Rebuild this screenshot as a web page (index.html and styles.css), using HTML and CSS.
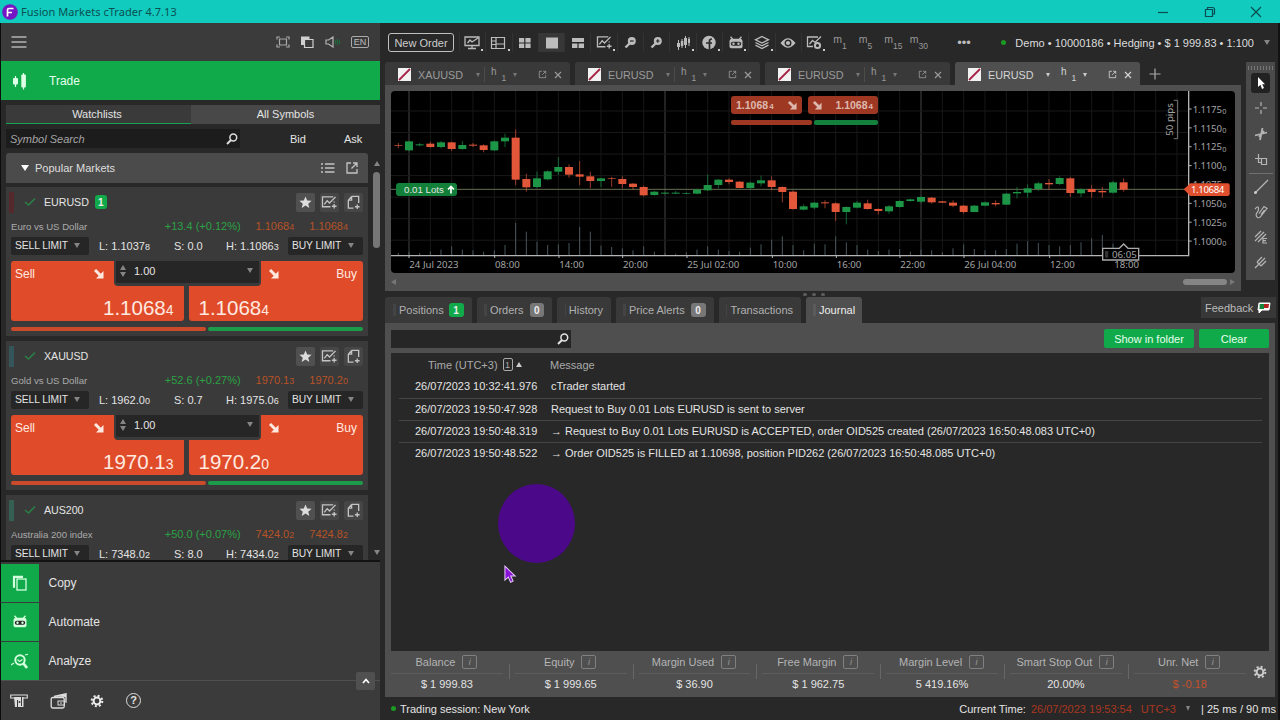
FILE: index.html
```html
<!DOCTYPE html>
<html lang="en">
<head>
    <meta charset="UTF-8">
    <meta name="viewport" content="width=device-width, initial-scale=1.0">
    <title>Fusion Markets cTrader 4.7.13</title>
    <link rel="stylesheet" href="styles.css">
</head>
<body>

<!-- icon set -->
<svg class="defs" width="0" height="0">
    <symbol id="star" viewBox="0 0 16 16"><path d="M8 1.500l1.800 4.400 4.700.3-3.600 3 1.200 4.600L8 11.300l-4.100 2.500 1.200-4.600-3.600-3 4.700-.3z" fill="currentColor"/></symbol>
    <symbol id="chart-add" viewBox="0 0 18 16"><path d="M13 2H1.500v10.500H10M14 7v1M3.500 10l3-4 2.500 2.500 6.500-6.500M14 9.500v5M11.500 12h5" fill="none" stroke="currentColor" stroke-width="1.400"/></symbol>
    <symbol id="doc-add" viewBox="0 0 16 16"><path d="M6 1.500h7.500v7M6 1.500L2.500 5.500v8.500H8M6 1.500v4H2.500M12 10v5M9.500 12.500h5" fill="none" stroke="currentColor" stroke-width="1.400"/></symbol>
    <symbol id="search" viewBox="0 0 12 12"><circle cx="7.300" cy="4.500" r="3.400" fill="none" stroke="currentColor" stroke-width="1.500"/><path d="M5 7L1 11" stroke="currentColor" stroke-width="2"/></symbol>
    <symbol id="arrow" viewBox="0 0 10 10"><path d="M1 1l5 5" stroke="currentColor" stroke-width="3"/><path d="M9.500 2v7.500H2z" fill="currentColor"/></symbol>
    <symbol id="check" viewBox="0 0 12 10"><path d="M1 5l3.500 3L11 1.500" fill="none" stroke="currentColor" stroke-width="1.500"/></symbol>
    <symbol id="popout" viewBox="0 0 14 14"><path d="M6 2H2v10h10V8M8 2h4v4M12 2L6.500 7.500" fill="none" stroke="currentColor" stroke-width="1.300"/></symbol>
    <symbol id="gear" viewBox="0 0 14 14"><circle cx="7" cy="7" r="3.400" fill="none" stroke="currentColor" stroke-width="2"/><circle cx="7" cy="7" r="5.300" fill="none" stroke="currentColor" stroke-width="2" stroke-dasharray="2 2.160"/></symbol>
    <symbol id="robot" viewBox="0 0 16 16"><path d="M2.500 1.800l2.200 2.500M13.500 1.800l-2.200 2.500" stroke="currentColor" stroke-width="1.300"/><path d="M1.500 6.500q0-2.700 2.700-2.700h7.600q2.700 0 2.700 2.700v5q0 1.700-1.700 1.700H3.200q-1.700 0-1.700-1.700z" fill="currentColor"/><rect class="cut" x="2.800" y="6.800" width="10.400" height="4" rx="2"/><circle cx="5.500" cy="8.800" r="1.200" fill="currentColor"/><circle cx="10.500" cy="8.800" r="1.200" fill="currentColor"/></symbol>
    <symbol id="flag" viewBox="0 0 13 13"><path d="M0 0h13v13H0z" fill="#f2f2f2"/><path d="M1 12L12 1" stroke="#a62347" stroke-width="1.800"/></symbol>
</svg>

<header class="titlebar">
    <svg class="logo" width="16" height="16" viewBox="0 0 16 16"><circle cx="8" cy="8" r="7.800" fill="#7416c4"/><path d="M5.500 12.500V6q0-1.500 1.500-1.500h4.500M5.500 8.500H10" fill="none" stroke="#fff" stroke-width="1.700"/></svg>
    <span class="app-name">Fusion Markets cTrader 4.7.13</span>
    <div class="window-buttons">
        <svg width="12" height="12" viewBox="0 0 12 12"><path d="M1 6.500h10"/></svg>
        <svg width="12" height="12" viewBox="0 0 12 12"><path d="M3.500 3V1.500h5q2 0 2 2V8H9M1.500 3.500H8.500v7h-7z"/></svg>
        <svg width="12" height="12" viewBox="0 0 12 12"><path d="M1 1l10 10M11 1L1 11"/></svg>
    </div>
</header>

<div class="app">
    <aside class="sidebar">
        <div class="side-top">
            <svg width="16" height="14" viewBox="0 0 16 14"><path d="M.5 2h15M.5 7h15M.5 12h15" stroke="#b4b4b4" stroke-width="1.600"/></svg>
            <div class="side-tools">
                <svg width="14" height="12" viewBox="0 0 14 12"><path d="M1 3.500V1h3M10 1h3v2.500M13 8.500V11h-3M4 11H1V8.500" fill="none" stroke="#aaa" stroke-width="1.200"/><path d="M3.500 3h7v6h-7z" fill="none" stroke="#aaa" stroke-width="1.200"/></svg>
                <svg width="14" height="12" viewBox="0 0 14 12"><path d="M1 .5h8.500V3H4v6H1z" fill="#d0d0d0"/><path d="M4.500 3.500h8.500v8H4.500z" fill="none" stroke="#d0d0d0" stroke-width="1.200"/></svg>
                <svg width="16" height="12" viewBox="0 0 16 12"><path d="M1 4h2.500L8 1v10L3.500 8H1z" fill="none" stroke="#b4b4b4" stroke-width="1.200"/><path d="M10.500 4v4M12.500 3v6M14.500 4v4" stroke="#1d6a3b" stroke-width="1.200"/></svg>
                <span class="lang">EN</span>
            </div>
        </div>
        <div class="trade-head">
            <svg width="16" height="18" viewBox="0 0 16 18"><path d="M3.500 4v11M11.500 1v16.500" stroke="#dfffe6" stroke-width="1.200"/><rect x="1" y="6" width="5" height="6.500" rx="1" fill="#dfffe6"/><rect x="9.300" y="2.500" width="4.600" height="13" rx="1" fill="#dfffe6"/></svg>
            <span>Trade</span>
        </div>

        <div class="watch">
            <div class="watch-tabs">
                <div class="watch-tab active">Watchlists</div>
                <div class="watch-tab">All Symbols</div>
            </div>
            <div class="search-row">
                <div class="symbol-search"><span>Symbol Search</span><svg width="12" height="12"><use href="#search"/></svg></div>
                <span class="bid">Bid</span>
                <span class="ask">Ask</span>
            </div>
            <div class="scroll-area">
                <div class="list">
                    <div class="group">
                        <i class="tri white"></i><span>Popular Markets</span>
                        <svg class="list-ico" width="14" height="12" viewBox="0 0 14 12"><path d="M0 2h2M4 2h9.500M0 6h2M4 6h9.500M0 10h2M4 10h9.500" stroke="currentColor" stroke-width="1.600"/></svg>
                        <svg width="14" height="14"><use href="#popout"/></svg>
                    </div>

                    <div class="card">
                        <div class="card-head">
                            <i class="mark red"></i><svg class="ok" width="12" height="10"><use href="#check"/></svg>
                            <span class="symbol">EURUSD</span><span class="badge green">1</span>
                            <div class="card-tools">
                                <span class="ico"><svg width="15" height="15"><use href="#star"/></svg></span>
                                <span class="ico"><svg width="17" height="15"><use href="#chart-add"/></svg></span>
                                <span class="ico"><svg width="15" height="15"><use href="#doc-add"/></svg></span>
                            </div>
                        </div>
                        <div class="card-info"><span class="desc">Euro vs US Dollar</span><span class="change">+13.4 (+0.12%)</span><span class="quote">1.1068<small>4</small></span><span class="quote">1.1068<small>4</small></span></div>
                        <div class="card-limits"><span class="limit">SELL LIMIT <i class="tri"></i></span><span class="low">L: 1.1037<small>8</small></span><span class="spread">S: 0.0</span><span class="high">H: 1.1086<small>3</small></span><span class="limit buy">BUY LIMIT <i class="tri"></i></span></div>
                        <div class="deal">
                            <div class="side sell"><div class="side-name"><span>Sell</span><svg width="10" height="10"><use href="#arrow"/></svg></div><div class="price">1.1068<small>4</small></div></div>
                            <div class="side"><div class="side-name"><svg width="10" height="10"><use href="#arrow"/></svg><span>Buy</span></div><div class="price">1.1068<small>4</small></div></div>
                            <div class="volume"><span class="spin"><i class="tri up"></i><i class="tri"></i></span><span>1.00</span><i class="tri end"></i></div>
                        </div>
                        <div class="mood"><i></i><i></i></div>
                    </div>

                    <div class="card">
                        <div class="card-head">
                            <i class="mark teal"></i><svg class="ok" width="12" height="10"><use href="#check"/></svg>
                            <span class="symbol">XAUUSD</span>
                            <div class="card-tools">
                                <span class="ico"><svg width="15" height="15"><use href="#star"/></svg></span>
                                <span class="ico"><svg width="17" height="15"><use href="#chart-add"/></svg></span>
                                <span class="ico"><svg width="15" height="15"><use href="#doc-add"/></svg></span>
                            </div>
                        </div>
                        <div class="card-info"><span class="desc">Gold vs US Dollar</span><span class="change">+52.6 (+0.27%)</span><span class="quote">1970.1<small>3</small></span><span class="quote">1970.2<small>0</small></span></div>
                        <div class="card-limits"><span class="limit">SELL LIMIT <i class="tri"></i></span><span class="low">L: 1962.0<small>0</small></span><span class="spread">S: 0.7</span><span class="high">H: 1975.0<small>6</small></span><span class="limit buy">BUY LIMIT <i class="tri"></i></span></div>
                        <div class="deal">
                            <div class="side sell"><div class="side-name"><span>Sell</span><svg width="10" height="10"><use href="#arrow"/></svg></div><div class="price">1970.1<small>3</small></div></div>
                            <div class="side"><div class="side-name"><svg width="10" height="10"><use href="#arrow"/></svg><span>Buy</span></div><div class="price">1970.2<small>0</small></div></div>
                            <div class="volume"><span class="spin"><i class="tri up"></i><i class="tri"></i></span><span>1.00</span><i class="tri end"></i></div>
                        </div>
                        <div class="mood"><i></i><i></i></div>
                    </div>

                    <div class="card">
                        <div class="card-head">
                            <i class="mark sea"></i><svg class="ok" width="12" height="10"><use href="#check"/></svg>
                            <span class="symbol">AUS200</span>
                            <div class="card-tools">
                                <span class="ico"><svg width="15" height="15"><use href="#star"/></svg></span>
                                <span class="ico"><svg width="17" height="15"><use href="#chart-add"/></svg></span>
                                <span class="ico"><svg width="15" height="15"><use href="#doc-add"/></svg></span>
                            </div>
                        </div>
                        <div class="card-info"><span class="desc">Australia 200 index</span><span class="change">+50.0 (+0.07%)</span><span class="quote">7424.0<small>2</small></span><span class="quote">7424.8<small>2</small></span></div>
                        <div class="card-limits"><span class="limit">SELL LIMIT <i class="tri"></i></span><span class="low">L: 7348.0<small>2</small></span><span class="spread">S: 8.0</span><span class="high">H: 7434.0<small>2</small></span><span class="limit buy">BUY LIMIT <i class="tri"></i></span></div>
                    </div>
                </div>
                <div class="vscroll"><i class="tri up"></i><i class="thumb"></i><i class="tri"></i></div>
            </div>
        </div>

        <nav class="modes">
            <div class="mode"><span class="mode-ico"><svg width="16" height="16" viewBox="0 0 16 16"><path d="M11 1.800H2v11" fill="none" stroke="#d3ffdd" stroke-width="2.200"/><rect x="5" y="4" width="9" height="11" fill="none" stroke="#d3ffdd" stroke-width="1.300"/></svg></span>Copy</div>
            <div class="mode"><span class="mode-ico"><svg width="16" height="16"><use href="#robot"/></svg></span>Automate</div>
            <div class="mode"><span class="mode-ico"><svg width="18" height="16" viewBox="0 0 18 16"><circle cx="9" cy="7" r="4.700" fill="none" stroke="#d3ffdd" stroke-width="2"/><path d="M12.500 10.500L16 15" stroke="#d3ffdd" stroke-width="2.800"/><path d="M6.500 6.500L8.500 8.500l3-2M14 2l3-.8M0 12l3-2" fill="none" stroke="#d3ffdd" stroke-width="1.100"/></svg></span>Analyze</div>
        </nav>
        <div class="side-foot">
            <svg width="18" height="14" viewBox="0 0 18 14"><path d="M.7 1h16.600v3H.7z" fill="none" stroke="#ddd" stroke-width="1.100"/><path d="M4 3h9.500v10H5z" fill="#ddd"/><path d="M7.500 6v7M11.500 3v9" stroke="#3b3b3b"/><circle cx="9.500" cy="8" r="1" fill="#3b3b3b"/></svg>
            <svg width="18" height="16" viewBox="0 0 18 16"><path d="M4 3.500L16 .8v9" fill="none" stroke="#ddd" stroke-width="1.400"/><path d="M5 3.500L16 1v3z" fill="#ddd"/><rect x="1.200" y="4.500" width="13" height="10.500" rx="1.500" fill="none" stroke="#ddd" stroke-width="1.300"/><rect x="8" y="8" width="6.500" height="4" fill="none" stroke="#ddd"/><path d="M10 10h2" stroke="#ddd"/></svg>
            <svg class="w" width="14" height="14"><use href="#gear"/></svg>
            <span class="help">?</span>
            <span class="collapse"><svg width="8" height="6" viewBox="0 0 8 6"><path d="M1 5l3-3.500L7 5" fill="none" stroke="#fff" stroke-width="1.700"/></svg></span>
        </div>
    </aside>

    <main class="main">
        <div class="toolbar">
            <button class="new-order">New Order</button>
            <div class="tools">
                <span class="tool more"><svg width="17" height="15" viewBox="0 0 17 15"><path d="M1 2h14v8.500H1zM8 10.500V13M4 13.500h8M3.500 8l2.500-3 2 2L14 3" fill="none" stroke="currentColor" stroke-width="1.300"/></svg></span>
                <span class="tool more"><svg width="17" height="14" viewBox="0 0 17 14"><path d="M1.500 1.500h13v11h-13zM6 1.500v11M6 8h8.500M1.500 5h4M1.500 8.500h4" fill="none" stroke="currentColor" stroke-width="1.200"/></svg></span>
                <span class="tool"><svg width="14" height="12" viewBox="0 0 14 12"><path d="M1 1h5.200v4.400H1zM7.400 1h5.200v4.400H7.400zM1 6.600h5.200V11H1zM7.400 6.600h5.200V11H7.400z" fill="currentColor"/></svg></span>
                <span class="tool on"><svg width="14" height="12" viewBox="0 0 14 12"><path d="M1 .5h12v11H1z" fill="currentColor"/></svg></span>
                <span class="tool"><svg width="14" height="12" viewBox="0 0 14 12"><path d="M1 1h12v4H1zM1 6.500h5.400V11H1zM7.600 6.500H13V11H7.600z" fill="currentColor"/></svg></span>
                <span class="tool more"><svg width="17" height="15"><use href="#chart-add"/></svg></span>
                <span class="tool"><svg width="13" height="13" viewBox="0 0 13 13"><path d="M5.500 7.500L1.500 11.500" stroke="currentColor" stroke-width="2.400"/><circle cx="7.800" cy="5" r="4" fill="currentColor"/><path d="M6 5h3.600" stroke="#282828" stroke-width="1.200"/></svg></span>
                <span class="tool"><svg width="13" height="13" viewBox="0 0 13 13"><path d="M5.500 7.500L1.500 11.500" stroke="currentColor" stroke-width="2.400"/><circle cx="7.800" cy="5" r="4" fill="currentColor"/><path d="M6 5h3.600M7.800 3.200v3.600" stroke="#282828" stroke-width="1.200"/></svg></span>
                <span class="tool more"><svg width="15" height="16" viewBox="0 0 15 16"><path d="M2.500 5v10M6 4v9M9.500 1v12M13 2v9" stroke="currentColor"/><path d="M1 8h3v4H1zM4.800 6h2.500v5H4.800zM8 3h3v7H8zM12 4h2v4h-2z" fill="currentColor"/></svg></span>
                <span class="tool more"><svg width="15" height="15" viewBox="0 0 15 15"><circle cx="7" cy="7.500" r="6.700" fill="currentColor"/><path d="M7.500 14V6q0-2 2.500-2M4 8h6" fill="none" stroke="#282828" stroke-width="1.700"/></svg></span>
                <span class="tool more"><svg width="16" height="16"><use href="#robot"/></svg></span>
                <span class="tool more"><svg width="16" height="16" viewBox="0 0 16 16"><path d="M8 1.500l6.500 3.300L8 8 1.500 4.800zM1.500 7.500L8 10.800l6.500-3.300M1.500 10.200L8 13.500l6.500-3.300" fill="none" stroke="currentColor" stroke-width="1.300"/></svg></span>
                <span class="tool"><svg width="16" height="12" viewBox="0 0 16 12"><path d="M.5 6Q8-3.500 15.500 6 8 15.500.5 6z" fill="currentColor"/><circle cx="8" cy="6" r="2.800" fill="none" stroke="#282828" stroke-width="1.400"/></svg></span>
                <span class="tool more"><svg width="17" height="15" viewBox="0 0 17 15"><path d="M12 2H1.500v9.500H7M3.500 9l3-3.500L9 7.500l6-6" fill="none" stroke="currentColor" stroke-width="1.300"/><circle cx="11.500" cy="10.500" r="2.600" fill="none" stroke="currentColor" stroke-width="2"/></svg></span>
                <span class="tf">m<sub>1</sub></span>
                <span class="tf">m<sub>5</sub></span>
                <span class="tf">m<sub>15</sub></span>
                <span class="tf">m<sub>30</sub></span>
            </div>
            <span class="dots">•••</span>
            <div class="account"><i class="dot"></i><span>Demo • 10000186 • Hedging • $ 1 999.83 • 1:100</span><i class="tri"></i></div>
        </div>

        <div class="chart-row">
            <section class="chart-col">
                <div class="chart-tabs">
                    <div class="chart-tab"><svg width="13" height="13"><use href="#flag"/></svg><b>XAUUSD</b><i class="tri"></i><span class="period">h<sub>1</sub></span><i class="tri"></i><svg class="pop" width="9" height="9"><use href="#popout"/></svg><svg class="close" width="8" height="8" viewBox="0 0 8 8"><path d="M1 1l6 6M7 1L1 7"/></svg></div>
                    <div class="chart-tab"><svg width="13" height="13"><use href="#flag"/></svg><b>EURUSD</b><i class="tri"></i><span class="period">h<sub>1</sub></span><i class="tri"></i><svg class="pop" width="9" height="9"><use href="#popout"/></svg><svg class="close" width="8" height="8" viewBox="0 0 8 8"><path d="M1 1l6 6M7 1L1 7"/></svg></div>
                    <div class="chart-tab"><svg width="13" height="13"><use href="#flag"/></svg><b>EURUSD</b><i class="tri"></i><span class="period">h<sub>1</sub></span><i class="tri"></i><svg class="pop" width="9" height="9"><use href="#popout"/></svg><svg class="close" width="8" height="8" viewBox="0 0 8 8"><path d="M1 1l6 6M7 1L1 7"/></svg></div>
                    <div class="chart-tab active"><svg width="13" height="13"><use href="#flag"/></svg><b>EURUSD</b><i class="tri"></i><span class="period">h<sub>1</sub></span><i class="tri"></i><svg class="pop" width="9" height="9"><use href="#popout"/></svg><svg class="close" width="8" height="8" viewBox="0 0 8 8"><path d="M1 1l6 6M7 1L1 7"/></svg></div>
                    <svg class="plus" width="12" height="12" viewBox="0 0 12 12"><path d="M6 .5v11M.5 6h11" stroke="#aaa" stroke-width="1.200"/></svg>
                </div>
                <div class="chart-panel">
                    <div class="chart-box">
                        <svg id="chart" width="844" height="182" viewBox="0 0 2532 546"></svg>
                        <div class="quick">
                            <div class="quick-btns">
                                <span>1.1068<small>4</small><svg width="9" height="9"><use href="#arrow"/></svg></span>
                                <span><svg width="9" height="9"><use href="#arrow"/></svg>1.1068<small>4</small></span>
                            </div>
                            <div class="mood"><i></i><i></i></div>
                        </div>
                        <div class="lots">0.01 Lots <svg width="8" height="9" viewBox="0 0 8 9"><path d="M4 8.500V2M1 4.500l3-3 3 3" fill="none" stroke="#fff" stroke-width="1.700"/></svg></div>
                    </div>
                    <div class="hscroll"><i class="left"></i><i class="bar"></i><i class="right"></i></div>
                </div>
            </section>
            <div class="draw-tools">
                <i class="grip"></i>
                <span class="draw on"><svg width="14" height="14" viewBox="0 0 14 14"><path d="M4 1v10l2.500-2.300L8 13l2-1-1.800-3.800H11z" fill="#fff"/></svg></span>
                <span class="draw"><svg width="14" height="14" viewBox="0 0 14 14"><path d="M7 1v4M7 9v4M1 7h4M9 7h4"/></svg></span>
                <span class="draw"><svg width="14" height="14" viewBox="0 0 14 14"><path class="bold" d="M8.500 1L6 13M1 8.500l12-3M5 10l5-6"/></svg></span>
                <span class="draw"><svg width="14" height="14" viewBox="0 0 14 14"><path d="M4.500 1v8.500H8M1 5.500h7M7.500 5.500h5v6h-5z"/></svg></span>
                <hr>
                <span class="draw"><svg width="16" height="16" viewBox="0 0 16 16"><path d="M2 14L15 1"/><circle cx="2.500" cy="13.500" r="1.500" fill="#ccc" stroke="none"/></svg></span>
                <span class="draw"><svg width="14" height="14" viewBox="0 0 14 14"><path d="M1 4q3-3.500 3.500-1t-2 5.500q-1 3 1 4t4-2l5.500-7-3-2-5 7M7 9.500l3.500-4.500"/></svg></span>
                <span class="draw"><svg width="14" height="14" viewBox="0 0 14 14"><path d="M1 7l6-6M1 11L10 2M4 12l8-8M9 8.500h4M9 8.500v4.500h4M9 10.700h3"/></svg></span>
                <span class="draw"><svg width="14" height="14" viewBox="0 0 14 14"><path d="M1 13l4-4M3 7l4 4M3 7l5-5M5 9l6-6M7 11l5-5"/></svg></span>
            </div>
        </div>

        <div class="splitter"><i></i><i></i><i></i></div>

        <div class="panel-tabs">
            <div class="ptab" data-tab="positions">Positions<span class="badge green">1</span></div>
            <div class="ptab" data-tab="orders">Orders<span class="badge">0</span></div>
            <div class="ptab" data-tab="history">History</div>
            <div class="ptab" data-tab="alerts">Price Alerts<span class="badge">0</span></div>
            <div class="ptab" data-tab="transactions">Transactions</div>
            <div class="ptab active" data-tab="journal">Journal</div>
            <div class="feedback">Feedback <svg width="14" height="12" viewBox="0 0 14 12"><path d="M2 1h11l-1 7H5l-3 3V8H1z" fill="#fff" stroke="#fff"/><path d="M2.700 2H7v5H2.500z" fill="#17833b"/><path d="M7 2h5l-.6 4H7z" fill="#b32020"/></svg></div>
        </div>

        <section class="panel">
            <div class="panel-bar">
                <div class="filter"><svg width="12" height="12"><use href="#search"/></svg></div>
                <button class="btn folder">Show in folder</button>
                <button class="btn clear">Clear</button>
            </div>
            <div class="journal">
                <div class="jhead"><span class="jtime">Time (UTC+3) <em>1</em><i class="tri up"></i></span><span>Message</span></div>
                <div class="jrow"><span class="jtime">26/07/2023 10:32:41.976</span><span>cTrader started</span></div>
                <div class="jrow"><span class="jtime">26/07/2023 19:50:47.928</span><span>Request to Buy 0.01 Lots EURUSD is sent to server</span></div>
                <div class="jrow"><span class="jtime">26/07/2023 19:50:48.319</span><span>→ Request to Buy 0.01 Lots EURUSD is ACCEPTED, order OID525 created (26/07/2023 16:50:48.083 UTC+0)</span></div>
                <div class="jrow"><span class="jtime">26/07/2023 19:50:48.522</span><span>→ Order OID525 is FILLED at 1.10698, position PID262 (26/07/2023 16:50:48.085 UTC+0)</span></div>
            </div>
            <div class="summary">
                <div class="sum"><div class="sum-name">Balance<em>i</em></div><div class="sum-val">$ 1 999.83</div></div>
                <div class="sum"><div class="sum-name">Equity<em>i</em></div><div class="sum-val">$ 1 999.65</div></div>
                <div class="sum"><div class="sum-name">Margin Used<em>i</em></div><div class="sum-val">$ 36.90</div></div>
                <div class="sum"><div class="sum-name">Free Margin<em>i</em></div><div class="sum-val">$ 1 962.75</div></div>
                <div class="sum"><div class="sum-name">Margin Level<em>i</em></div><div class="sum-val">5 419.16%</div></div>
                <div class="sum"><div class="sum-name">Smart Stop Out<em>i</em></div><div class="sum-val">20.00%</div></div>
                <div class="sum"><div class="sum-name">Unr. Net<em>i</em></div><div class="sum-val loss">$ -0.18</div></div>
                <svg class="sum-gear" width="14" height="14"><use href="#gear"/></svg>
            </div>
        </section>

        <footer class="status">
            <i class="dot"></i><span>Trading session: New York</span>
            <span class="now">Current Time:</span><span class="clock">26/07/2023 19:53:54</span><span class="zone">UTC+3</span><i class="tri"></i><span class="ping">| 25 ms / 90 ms</span>
        </footer>
    </main>
</div>

<div class="spot"></div>
<svg class="pointer" width="13" height="19" viewBox="0 0 14 20"><path d="M1 1v15l3.600-3.300 2.600 5.600 2.600-1.200-2.500-5.400H12z" fill="#8a12d8" stroke="#e4c8f5" stroke-width="1.100"/></svg>

<script src="script.js"></script>
</body>
</html>
```
FILE: styles.css
```css
* {
    box-sizing: border-box;
}

body {
    margin: 0;
    width: 1280px;
    height: 720px;
    overflow: hidden;
    background: #282828;
    color: #e4e4e4;
    font-family: "Liberation Sans", Arial, sans-serif;
    font-size: 11px;
    position: relative;
}

svg {
    display: block;
    flex: none;
}

.defs {
    position: absolute;
}

.cut {
    fill: #282828;
}

/* small triangles */
.tri {
    display: inline-block;
    flex: none;
    border: 3.500px solid transparent;
    border-top: 5px solid #858585;
    border-bottom: 0;
}

.tri.up {
    border-top: 0;
    border-bottom: 5px solid #858585;
}

.tri.white {
    border-left-width: 4px;
    border-right-width: 4px;
    border-top: 6px solid #fff;
}

.dot {
    width: 5px;
    height: 5px;
    border-radius: 50%;
    background: #1b9a22;
}

.badge {
    display: inline-flex;
    align-items: center;
    justify-content: center;
    width: 15px;
    height: 14px;
    border-radius: 3px;
    background: #777;
    color: #eee;
    font-size: 10px;
    font-weight: bold;
}

.badge.green {
    background: #10aa4a;
}

/* title bar */
.titlebar {
    display: flex;
    align-items: center;
    height: 23px;
    padding-left: 2px;
    background: #10cbbe;
    color: #0b4f53;
}

.app-name {
    margin-left: 3px;
    font-family: "Noto Sans", sans-serif;
    font-size: 11px;
    letter-spacing: 0.040px;
}

.window-buttons {
    display: flex;
    gap: 34.500px;
    margin-left: auto;
    margin-right: 18px;
}

.window-buttons svg {
    fill: none;
    stroke: #0b4a50;
    stroke-width: 1.200;
}

.app {
    display: flex;
    height: 697px;
}

/* sidebar */
.sidebar {
    display: flex;
    flex-direction: column;
    width: 380px;
    border-left: 1px solid #0c0c0c;
    background: #3b3b3b;
}

.side-top {
    display: flex;
    align-items: center;
    justify-content: space-between;
    height: 38px;
    padding: 0 11px 0 10px;
}

.side-tools {
    display: flex;
    align-items: center;
    gap: 10.500px;
}

.lang {
    width: 18px;
    height: 12px;
    border: 1px solid #aaa;
    border-radius: 2px;
    font-size: 9px;
    line-height: 10px;
    text-align: center;
    color: #bbb;
}

.trade-head {
    display: flex;
    align-items: center;
    gap: 21px;
    height: 39px;
    padding-left: 11px;
    background: #10aa4b;
    color: #e4ffea;
    font-size: 12px;
}

.watch {
    display: flex;
    flex-direction: column;
    height: 462px;
    padding: 5px 0 0 5px;
    background: #282828;
    border-bottom: 2px solid #131313;
}

.watch-tabs {
    display: flex;
    height: 19px;
}

.watch-tab {
    flex: 1;
    line-height: 19px;
    text-align: center;
    background: #484848;
}

.watch-tab.active {
    flex: none;
    width: 185px;
    padding-right: 3px;
    background: #3a3a3a;
    line-height: 18px;
    border-bottom: 1px solid #17a355;
}

.search-row {
    display: flex;
    align-items: center;
    height: 19px;
    margin-top: 5px;
}

.symbol-search {
    display: flex;
    align-items: center;
    justify-content: space-between;
    width: 234px;
    height: 19px;
    padding: 0 2px 0 4px;
    background: #1c1c1c;
    color: #a5a5a5;
    font-style: italic;
}

.symbol-search svg {
    color: #ddd;
}

.bid {
    margin-left: 50px;
}

.ask {
    margin-left: 38px;
}

.scroll-area {
    display: flex;
    flex: 1;
    margin-top: 5px;
    overflow: hidden;
}

.list {
    width: 362px;
}

.group {
    display: flex;
    align-items: center;
    height: 30px;
    padding: 0 9px 0 15px;
    margin-bottom: 4px;
    background: #4b4b4b;
    color: #dedede;
    border-radius: 3px 3px 0 0;
}

.group span {
    margin-left: 6px;
    margin-right: auto;
}

.group svg {
    color: #c4c4c4;
}

.list-ico {
    margin-right: 10px;
}

.card {
    height: 149px;
    margin-bottom: 5px;
    padding: 4px 5px 0;
    background: #3a3a3a;
}

.card-head {
    display: flex;
    align-items: center;
    height: 22px;
}

.mark {
    width: 5px;
    height: 21px;
    margin-left: -2px;
}

.mark.red {
    background: #55282c;
}

.mark.teal {
    background: #34555a;
}

.mark.sea {
    background: #345f52;
}

.ok {
    margin-left: 10px;
    margin-right: 8px;
    color: #2a8146;
}

.symbol {
    font-size: 10.700px;
    letter-spacing: -0.050px;
}

.card-head .badge {
    width: 12px;
    margin-left: 6px;
}

.card-tools {
    display: flex;
    gap: 5px;
    margin-left: auto;
}

.ico {
    display: flex;
    align-items: center;
    justify-content: center;
    width: 19px;
    height: 19px;
    border-radius: 2px;
    background: #464646;
    color: #c4c4c4;
}

.ico:first-child {
    background: #505050;
    color: #ddd;
}

.card-info {
    display: flex;
    align-items: center;
    height: 26px;
    white-space: nowrap;
}

.desc {
    width: 156px;
    font-size: 9.600px;
    color: #aaa;
}

.change {
    width: 92px;
    color: #2aa244;
}

.quote {
    width: 54.500px;
    color: #b85227;
    font-size: 11px;
}

.card small {
    font-size: 9px;
}

.card-limits {
    display: flex;
    align-items: center;
    height: 18px;
    margin-top: -2px;
    white-space: nowrap;
}

.limit {
    display: flex;
    align-items: center;
    justify-content: space-between;
    width: 78px;
    height: 18px;
    padding: 0 9px 1px 4px;
    border-radius: 2px;
    background: #262626;
    font-size: 10.300px;
    letter-spacing: -0.100px;
}

.limit.buy {
    width: 75px;
    margin-left: auto;
}

.low {
    width: 75px;
    margin-left: 10px;
}

.spread {
    width: 52px;
}

.deal {
    position: relative;
    display: flex;
    gap: 5px;
    height: 60px;
    margin-top: 6px;
}

.side {
    flex: 1;
    padding: 5px 6px 0 10px;
    border-radius: 3px;
    background: #e04c2a;
    color: #ffe9e0;
}

.sell {
    padding: 5px 10px 0 4px;
}

.side-name {
    display: flex;
    align-items: center;
    justify-content: space-between;
    height: 15px;
    font-size: 12px;
}

/* the arrows sit next to the volume box */
.sell .side-name {
    padding-right: 70px;
}

.side:not(.sell) .side-name {
    padding-left: 70px;
}

.price {
    margin-top: 15px;
    font-size: 20.500px;
    line-height: 24px;
}

.card .price small {
    font-size: 14px;
}

.sell .price {
    text-align: right;
}

.volume {
    position: absolute;
    left: 103px;
    top: -1px;
    display: flex;
    align-items: center;
    width: 147px;
    height: 26px;
    padding: 0 6px 3px 4px;
    border: solid #3a3a3a;
    border-width: 1px 2px 3px;
    border-radius: 0 0 4px 4px;
    background: #262626;
}

.spin {
    display: flex;
    flex-direction: column;
    gap: 2px;
    margin-right: 8px;
}

.end {
    margin-left: auto;
}

.spin .tri {
    border-left-width: 3px;
    border-right-width: 3px;
}

.mood {
    display: flex;
    gap: 2px;
    margin-top: 6px;
}

.mood i {
    width: 195px;
    height: 4px;
    border-radius: 2px;
    background: #cb4a2b;
}

.mood i + i {
    flex: 1;
    background: #1c9c4a;
}

.vscroll {
    display: flex;
    flex-direction: column;
    align-items: center;
    flex: 1;
    padding: 8px 0 5px 5px;
}

.vscroll .thumb {
    width: 7px;
    height: 76px;
    margin-top: 6px;
    margin-bottom: auto;
    border-radius: 4px;
    background: #767676;
}

.mode {
    display: flex;
    align-items: center;
    height: 39px;
    font-size: 12px;
}

.mode-ico {
    display: flex;
    align-items: center;
    justify-content: center;
    width: 38px;
    height: 38px;
    margin-right: 9.500px;
    background: #10aa4b;
    color: #d3ffdd;
}

.modes {
    padding-top: 1px;
}

.mode-ico .cut {
    fill: #10aa4b;
}

.side-foot {
    position: relative;
    display: flex;
    align-items: center;
    flex: 1;
    gap: 22px;
    padding: 0 0 0 9px;
    border-top: 1px solid #505050;
}

.side-foot .w {
    color: #eee;
}

.help {
    width: 15px;
    height: 15px;
    border: 1.500px solid #ddd;
    border-radius: 50%;
    font-size: 11px;
    font-weight: bold;
    line-height: 12px;
    text-align: center;
}

.collapse {
    position: absolute;
    right: 5px;
    top: -9px;
    display: flex;
    align-items: center;
    justify-content: center;
    width: 19px;
    height: 18px;
    border-radius: 2px;
    background: #505050;
}

/* main column */
.main {
    display: flex;
    flex-direction: column;
    width: 900px;
    padding-left: 5px;
    border-right: 2px solid #121212;
}

.toolbar {
    display: flex;
    align-items: center;
    height: 39px;
    padding-left: 3px;
    color: #bcbcbc;
}

.new-order {
    width: 66px;
    height: 19px;
    padding: 0;
    border: 1.500px solid #c0c0c0;
    border-radius: 3px;
    background: none;
    color: #ccc;
    font: 11px "Liberation Sans", Arial, sans-serif;
}

.tools {
    display: flex;
    margin-left: 5px;
}

.tool {
    position: relative;
    display: flex;
    align-items: center;
    justify-content: center;
    width: 26.300px;
    height: 19px;
    border-left: 1px solid #333;
}

.tool.on {
    background: #373737;
}

.more::after {
    content: "";
    position: absolute;
    right: 2px;
    bottom: 1px;
    width: 2px;
    height: 2px;
    background: #ccc;
}

.tf {
    width: 25.500px;
    padding-left: 6px;
    font-size: 10.500px;
    line-height: 12px;
    color: #999;
    white-space: nowrap;
}

.tf sub,
.period sub {
    font-size: 8.500px;
    line-height: 0;
    vertical-align: -6px;
}

.period sub {
    margin-left: 5px;
}

.dots {
    margin-left: 28px;
    font-size: 13px;
}

.account {
    display: flex;
    align-items: center;
    margin-left: auto;
    margin-right: 8px;
    color: #ddd;
}

.account span {
    margin: 0 10px 0 9px;
    white-space: nowrap;
}

.account .tri {
    border-left-width: 3px;
    border-right-width: 3px;
}

.chart-row {
    display: flex;
    gap: 5px;
    height: 229px;
}

.chart-col {
    width: 856px;
}

.chart-tabs {
    display: flex;
    align-items: center;
    gap: 5px;
    height: 23px;
}

.chart-tab {
    display: flex;
    align-items: center;
    width: 185px;
    height: 23px;
    padding: 2px 8px 0 13px;
    border-radius: 3px 3px 0 0;
    background: #393939;
    color: #999;
}

.chart-tab.active {
    background: #4f4f4f;
    color: #d4d4d4;
}

.chart-tab b {
    width: 58px;
    margin-left: 7px;
    font-size: 10.800px;
    font-weight: normal;
}

.chart-tab .tri {
    border-width: 4px 2.500px 0;
    border-top-color: #777;
}

.chart-tab.active .tri {
    border-top-color: #ccc;
}

.period {
    width: 29px;
    height: 15px;
    margin-left: 4px;
    padding-left: 6px;
    border-left: 1px solid #4c4c4c;
    font-size: 10px;
    line-height: 10px;
    white-space: nowrap;
}

.pop {
    margin-left: auto;
}

.close {
    margin-left: 7px;
    stroke: currentColor;
    stroke-width: 1.200;
}

.plus {
    margin-left: 4px;
}

.chart-panel {
    height: 206px;
    padding: 6px 6px 0;
    background: #4f4f4f;
}

.chart-box {
    position: relative;
    height: 182px;
    border-radius: 4px;
    overflow: hidden;
    background: #000;
}

#chart text {
    font-family: "Noto Sans", sans-serif;
    font-size: 29px;
    fill: #a4a4a4;
}

#chart .sub {
    font-size: 22px;
}

/* quick trade buttons over the chart */
.quick {
    position: absolute;
    left: 340px;
    top: 5px;
    width: 147px;
}

.quick-btns {
    display: flex;
    gap: 6px;
}

.quick-btns span {
    display: flex;
    align-items: center;
    width: 71px;
    height: 18px;
    padding: 0 5px;
    border-radius: 3px;
    background: #9f3823;
    color: #ddb8ae;
    font-weight: bold;
    font-size: 10.500px;
}

.quick-btns small {
    padding: 3px 0 0 1px;
    font-size: 8px;
}

.quick-btns svg {
    margin-left: auto;
}

.quick-btns span + span svg {
    margin: 0 auto 0 0;
}

.quick .mood {
    margin-top: 6px;
}

.quick .mood i {
    width: 81px;
    height: 5px;
    background: #9f3823;
}

.quick .mood i + i {
    background: #13803b;
}

.lots {
    position: absolute;
    left: 5px;
    top: 92px;
    display: flex;
    align-items: center;
    gap: 3px;
    width: 61px;
    height: 13px;
    padding-left: 8px;
    border-radius: 3px;
    background: #128038;
    font-size: 9.700px;
    white-space: nowrap;
}

.hscroll {
    display: flex;
    align-items: center;
    height: 18px;
}

.hscroll .left {
    border: 3px solid transparent;
    border-right: 5px solid #777;
    border-left: 0;
}

.hscroll .bar {
    width: 44px;
    height: 6px;
    margin-left: auto;
    border-radius: 3px;
    background: #858585;
}

.hscroll .right {
    margin-left: 3px;
    border: 3px solid transparent;
    border-left: 5px solid #777;
    border-right: 0;
}

.draw-tools {
    display: flex;
    flex-direction: column;
    align-items: center;
    width: 29px;
    height: 218px;
    padding-top: 4px;
    background: #4a4a4a;
}

.grip {
    width: 26px;
    height: 4px;
    margin-bottom: 2px;
    background: repeating-linear-gradient(90deg, #777 0 1px, #4a4a4a 1px 3px);
}

.draw {
    display: flex;
    align-items: center;
    justify-content: center;
    width: 19px;
    height: 22px;
    margin-bottom: 4px;
    border-radius: 3px;
}

.draw.on {
    height: 20px;
    margin-top: 1px;
    background: #222;
}

.draw path {
    fill: none;
    stroke: #b5b5b5;
    stroke-width: 1.200;
}

.draw .bold {
    stroke-width: 1.800;
}

.draw.on path {
    fill: #fff;
    stroke: none;
}

.draw-tools hr {
    width: 24px;
    height: 1px;
    margin: -2px 0 2px;
    border: 0;
    background: #707070;
}

.draw-tools hr ~ .draw {
    margin-bottom: 3px;
}

.splitter {
    display: flex;
    align-items: center;
    justify-content: center;
    gap: 5px;
    height: 6px;
    padding-right: 36px;
    padding-top: 1px;
}

.splitter i {
    width: 4px;
    height: 3px;
    border-radius: 2px;
    background: #5c5c5c;
}

.panel-tabs {
    display: flex;
    gap: 5px;
    height: 26px;
}

.ptab {
    display: flex;
    align-items: center;
    padding: 0 8px;
    border-radius: 3px 3px 0 0;
    background: #393939;
    color: #b0b0b0;
}

.ptab::before {
    content: "";
    width: 3px;
    height: 12px;
    margin-right: 3px;
    background: #444;
}

.ptab.active {
    background: #4f4f4f;
    color: #eee;
    padding: 0 5px 0 7px;
}

.ptab.active::before {
    background: #5b5b5b;
}

.ptab .badge {
    margin-left: 6px;
}

.ptab[data-tab="positions"] {
    width: 87px;
}

.ptab[data-tab="positions"] .badge {
    margin-left: 5px;
}

.ptab[data-tab="orders"] {
    width: 75px;
    padding-left: 7px;
}

.ptab[data-tab="history"] {
    width: 54px;
    padding-left: 8px;
}

.ptab[data-tab="alerts"] {
    width: 98px;
    padding-left: 7px;
}

.ptab[data-tab="transactions"] {
    width: 82px;
    padding-left: 7px;
}

.ptab[data-tab="journal"] {
    width: 56px;
}

.feedback {
    display: flex;
    align-items: center;
    gap: 4px;
    width: 75px;
    height: 21px;
    margin-left: auto;
    margin-right: 2px;
    padding-left: 4px;
    background: #383838;
    color: #bbb;
}

.panel {
    width: 890px;
    height: 374px;
    background: #4f4f4f;
}

.panel-bar {
    display: flex;
    align-items: center;
    gap: 5px;
    height: 30px;
    padding: 1px 6px 0;
}

.filter {
    display: flex;
    align-items: center;
    justify-content: flex-end;
    width: 180px;
    height: 18px;
    margin-right: auto;
    padding-right: 2px;
    background: #262626;
}

.btn {
    height: 19px;
    border: 0;
    border-radius: 2px;
    background: #10aa4b;
    color: #eaffee;
    font: 11px "Liberation Sans", Arial, sans-serif;
}

.folder {
    width: 90px;
}

.clear {
    width: 70px;
}

.journal {
    height: 298px;
    margin: 0 6px;
    padding: 0 7px 0 8px;
    background: #282828;
}

.jhead,
.jrow {
    display: flex;
    align-items: center;
    height: 22px;
    padding: 0 0 2px 16px;
    white-space: nowrap;
}

.jhead {
    height: 23px;
    padding-bottom: 0;
    color: #aaa;
}

.jrow + .jrow {
    border-top: 1px solid #454545;
}

.jtime {
    display: flex;
    align-items: center;
    width: 136px;
}

.jhead .jtime {
    width: 135px;
    padding-left: 13px;
}

.jhead em {
    width: 10px;
    height: 13px;
    margin: 0 3px 0 5px;
    border: 1px solid #aaa;
    border-radius: 2px;
    font-size: 9px;
    font-style: normal;
    line-height: 12px;
    text-align: center;
}

.jhead .tri {
    border-bottom-color: #ccc;
    border-left-width: 3px;
    border-right-width: 3px;
}

.summary {
    display: flex;
    align-items: center;
    height: 46px;
}

.sum {
    position: relative;
    width: 123.800px;
    height: 46px;
    padding: 0 6px;
    text-align: center;
}

.sum + .sum::before {
    content: "";
    position: absolute;
    left: 0;
    top: 13px;
    width: 1px;
    height: 15px;
    background: #676767;
}

.sum-name {
    display: flex;
    align-items: center;
    justify-content: center;
    gap: 7px;
    height: 23px;
    padding-right: 1px;
    border-bottom: 1px solid #5d5d5d;
    color: #b4b4b4;
}

.sum-name em {
    width: 15px;
    height: 14px;
    border: 1px solid #808080;
    border-radius: 2px;
    color: #999;
    font-size: 9px;
    line-height: 12px;
}

.sum-val {
    line-height: 21px;
}

.loss {
    color: #c4512c;
}

.sum-gear {
    margin: -4px 0 0 1px;
    color: #ccc;
}

.status {
    display: flex;
    align-items: center;
    height: 23px;
    padding-left: 6px;
    white-space: nowrap;
}

.status .dot {
    margin-right: 4px;
}

.now {
    margin-left: auto;
}

.clock,
.zone {
    margin-left: 5px;
    color: #a83720;
}

.zone {
    margin-left: 9px;
}

.status .tri {
    margin: 0 11px 0 10px;
    border-left-width: 2.500px;
    border-right-width: 2.500px;
}

.ping {
    margin-right: 2px;
}

/* click highlight and mouse pointer */
.spot {
    position: absolute;
    left: 498px;
    top: 484px;
    width: 77px;
    height: 79px;
    border-radius: 50%;
    background: #4b0889;
}

.pointer {
    position: absolute;
    left: 504px;
    top: 565px;
}
```
FILE: script.js
```js
// all chart values are in viewBox units, three to a pixel
const chart = document.getElementById('chart');
const BASE = 494;
const AXIS = 2393;
const UP = '#1c9547';
const DOWN = '#e2573a';

// [body top, body bottom, wick top, wick bottom, up?, volume height]
const candles = [
    [163, 165, 156, 172, 0, 8], [151, 178, 151, 180, 1, 11], [160, 163, 156, 166, 1, 8], [158, 168, 152, 170, 0, 13],
    [154, 168, 150, 172, 1, 18], [154, 174, 152, 180, 0, 28], [162, 174, 150, 176, 1, 18], [161, 164, 156, 168, 0, 16],
    [163, 177, 160, 184, 0, 12], [151, 178, 148, 180, 1, 16], [140, 151, 128, 168, 1, 32], [140, 266, 115, 282, 0, 98],
    [264, 289, 248, 302, 0, 72], [262, 288, 242, 292, 1, 42], [241, 265, 238, 268, 1, 32], [228, 242, 198, 252, 1, 34],
    [228, 251, 220, 260, 0, 38], [250, 257, 210, 282, 0, 86], [256, 270, 242, 292, 0, 72], [262, 270, 260, 288, 1, 30],
    [261, 263, 258, 288, 0, 26], [264, 279, 256, 292, 0, 22], [278, 288, 276, 296, 0, 16], [288, 313, 284, 316, 0, 28],
    [302, 312, 300, 314, 1, 12], [305, 308, 304, 309, 1, 8], [305, 308, 300, 309, 1, 6], [306, 308, 304, 309, 1, 10],
    [296, 308, 294, 310, 1, 18], [282, 298, 250, 300, 1, 28], [266, 282, 264, 292, 1, 18], [266, 273, 262, 280, 0, 14],
    [272, 291, 270, 292, 0, 12], [275, 291, 272, 296, 1, 24], [268, 277, 254, 286, 1, 34], [268, 288, 256, 298, 0, 48],
    [288, 303, 286, 334, 0, 58], [302, 354, 298, 356, 0, 32], [346, 356, 340, 358, 1, 16], [335, 350, 333, 354, 1, 36],
    [334, 337, 328, 352, 0, 34], [337, 363, 334, 390, 0, 58], [348, 363, 346, 400, 1, 40], [335, 350, 330, 352, 1, 32],
    [337, 354, 326, 356, 0, 18], [354, 360, 352, 370, 0, 14], [346, 361, 342, 368, 1, 18], [330, 348, 328, 350, 1, 20],
    [325, 330, 323, 332, 1, 12], [318, 332, 316, 336, 1, 18], [320, 334, 318, 338, 0, 16], [331, 335, 330, 336, 0, 10],
    [335, 344, 328, 348, 0, 22], [344, 363, 342, 368, 0, 34], [344, 363, 342, 364, 1, 20], [334, 344, 332, 346, 1, 16],
    [336, 340, 328, 346, 0, 16], [308, 341, 306, 342, 1, 20], [303, 307, 288, 322, 1, 36], [292, 305, 280, 320, 1, 44],
    [277, 294, 272, 300, 1, 38], [276, 280, 264, 296, 0, 32], [261, 279, 256, 282, 1, 28], [262, 306, 258, 318, 0, 32],
    [295, 307, 292, 318, 1, 40], [294, 303, 282, 320, 0, 52], [300, 304, 288, 320, 0, 62], [274, 305, 270, 308, 1, 36],
    [274, 296, 262, 302, 0, 0]
];

const times = [[55, '24 Jul 2023'], [312, '08:00'], [505, '14:00'], [696, '20:00'], [889, '25 Jul 02:00'], [1145, '10:00'],
    [1337, '16:00'], [1528, '22:00'], [1720, '26 Jul 04:00'], [1977, '12:00'], [2170, '18:00']];

const prices = ['1.1175', '1.1150', '1.1125', '1.1100', '1.1075', '1.1050', '1.1025', '1.1000'];

let out = '';

const line = (x1, y1, x2, y2, color, width) => {
    out += `<line x1="${x1}" y1="${y1}" x2="${x2}" y2="${y2}" stroke="${color}" stroke-width="${width}"/>`;
};

// grid, with a brighter line at the start of each day
for (let x = 54, i = 0; x < AXIS; x += 64, i++) {
    line(x, 0, x, BASE, i % 12 === 0 && i < 30 ? '#444' : '#171717', 3);
}
for (let i = 0; i < 7; i++) {
    line(0, 60 + i * 64.6, AXIS, 60 + i * 64.6, '#191919', 3);
}
line(0, 295, AXIS, 295, '#667052', 3);

candles.forEach(([top, bottom, high, low, up, volume], i) => {
    const x = 22 + i * 32;
    const color = up ? UP : DOWN;
    line(x, BASE - volume, x, BASE, '#56666e', 2.500);
    line(x, high, x, low, color, 2);
    out += `<rect x="${x - 12}" y="${top}" width="24" height="${bottom - top}" fill="${color}"/>`;
});

line(0, BASE, AXIS, BASE, '#b5b5b5', 4);
line(AXIS, 0, AXIS, BASE + 2, '#b5b5b5', 4);

times.forEach(([x, label]) => {
    line(x - 1, BASE, x - 1, BASE + 7, '#b5b5b5', 3);
    out += `<text x="${x}" y="532">${label}</text>`;
});

prices.forEach((price, i) => {
    const y = 54 + i * 56.600;
    line(AXIS, y, AXIS + 9, y, '#b5b5b5', 3);
    out += `<text x="2405" y="${y + 11}" textLength="88">${price}</text><text class="sub" x="2494" y="${y + 15}">0</text>`;
});

// current price tag
out += `<path d="M2378 295l20-18h112q6 0 6 6v26q0 6-6 6H2398z" fill="#e0502e"/>
    <text x="2400" y="306" textLength="100" style="fill:#fff">1.10684</text>`;

// pips scale
out += `<path d="M2348 28h12v115h-12" fill="none" stroke="#777" stroke-width="3"/>
    <text transform="translate(2346 134) rotate(-90)">50 pips</text>`;

// time to bar close
out += `<path d="M2135 472h50l13-13 13 13h32v35h-108z" fill="#000" stroke="#aaa" stroke-width="4"/>
    <rect x="2142" y="480" width="10" height="20" fill="#333"/>
    <text x="2163" y="501">06:05</text>`;

chart.innerHTML = out;
```
